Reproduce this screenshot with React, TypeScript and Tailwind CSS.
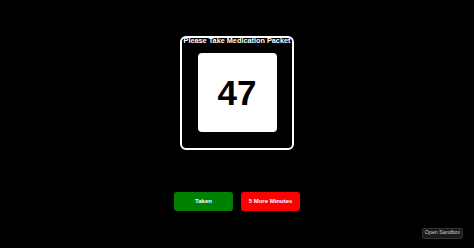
import React from "react";

export default function App() {
  return (
    <div className="relative h-[248px] w-full overflow-hidden bg-black" style={{ fontFamily: '"Liberation Sans", Arial, sans-serif' }}>
      <div className="flex flex-col items-center pt-[36px]">
        <div className="flex h-[114px] w-[114px] flex-col items-center rounded-[6px] border-2 border-white">
          <div className="-mt-[1px] whitespace-nowrap text-[7.3px] font-bold leading-[8.4px] text-white">
            Please Take Medication Packet
          </div>
          <div className="mt-[7.5px] flex h-[79px] w-[79px] items-center justify-center rounded-[4px] bg-white">
            <span className="text-[35px] font-bold leading-none text-black">47</span>
          </div>
        </div>
        <div className="mt-[42px] flex gap-[8px]">
          <button className="flex h-[19px] w-[59px] items-center justify-center rounded-[3px] bg-[#008000] text-[6px] font-bold text-white">
            Taken
          </button>
          <button className="flex h-[19px] w-[59px] items-center justify-center rounded-[3px] bg-[#ff0000] text-[6px] font-bold text-white">
            5 More Minutes
          </button>
        </div>
      </div>
      <button className="absolute bottom-[9px] right-[11px] flex h-[11.5px] w-[41px] items-center justify-center rounded-[2px] border border-[#333] bg-[#1a1a1a] text-[5.3px] text-[#d0d0d0]">
        Open Sandbox
      </button>
    </div>
  );
}
